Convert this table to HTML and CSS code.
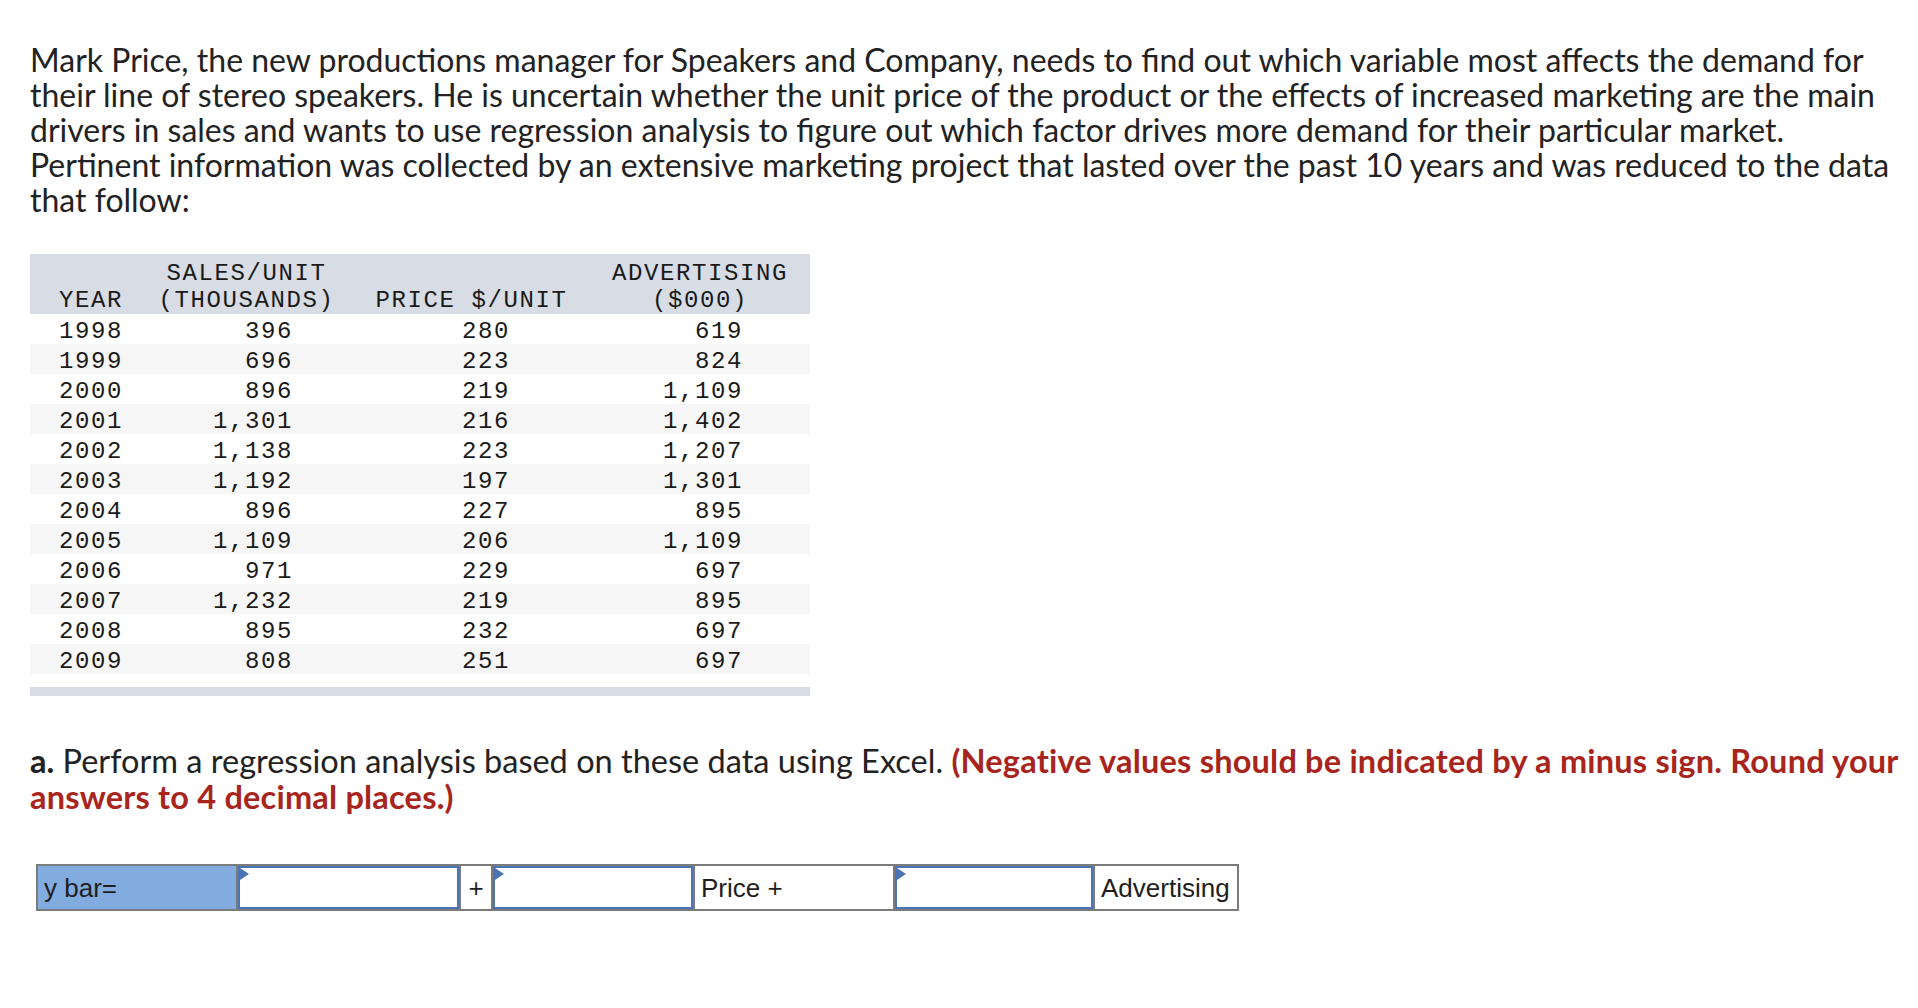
FILE: index.html
```html
<!DOCTYPE html>
<html lang="en">
<head>
<meta charset="utf-8">
<title>Regression question</title>
<link rel="stylesheet" href="styles.css">
</head>
<body>
<main class="question">
  <p class="intro">Mark Price, the new productions manager for Speakers and Company, needs to find out which variable most affects the demand for their line of stereo speakers. He is uncertain whether the unit price of the product or the effects of increased marketing are the main drivers in sales and wants to use regression analysis to figure out which factor drives more demand for their particular market. Pertinent information was collected by an extensive marketing project that lasted over the past 10 years and was reduced to the data that follow:</p>

  <div class="data-wrap">
    <table class="data">
      <colgroup>
        <col class="c-year">
        <col class="c-sales">
        <col class="c-price">
        <col class="c-adv">
      </colgroup>
      <thead>
        <tr>
          <th class="h-year">YEAR</th>
          <th>SALES/UNIT<br>(THOUSANDS)</th>
          <th>PRICE $/UNIT</th>
          <th>ADVERTISING<br>($000)</th>
        </tr>
      </thead>
      <tbody>
        <tr><td class="d-year">1998</td><td class="d-sales">396</td><td class="d-price">280</td><td class="d-adv">619</td></tr>
        <tr><td class="d-year">1999</td><td class="d-sales">696</td><td class="d-price">223</td><td class="d-adv">824</td></tr>
        <tr><td class="d-year">2000</td><td class="d-sales">896</td><td class="d-price">219</td><td class="d-adv">1,109</td></tr>
        <tr><td class="d-year">2001</td><td class="d-sales">1,301</td><td class="d-price">216</td><td class="d-adv">1,402</td></tr>
        <tr><td class="d-year">2002</td><td class="d-sales">1,138</td><td class="d-price">223</td><td class="d-adv">1,207</td></tr>
        <tr><td class="d-year">2003</td><td class="d-sales">1,192</td><td class="d-price">197</td><td class="d-adv">1,301</td></tr>
        <tr><td class="d-year">2004</td><td class="d-sales">896</td><td class="d-price">227</td><td class="d-adv">895</td></tr>
        <tr><td class="d-year">2005</td><td class="d-sales">1,109</td><td class="d-price">206</td><td class="d-adv">1,109</td></tr>
        <tr><td class="d-year">2006</td><td class="d-sales">971</td><td class="d-price">229</td><td class="d-adv">697</td></tr>
        <tr><td class="d-year">2007</td><td class="d-sales">1,232</td><td class="d-price">219</td><td class="d-adv">895</td></tr>
        <tr><td class="d-year">2008</td><td class="d-sales">895</td><td class="d-price">232</td><td class="d-adv">697</td></tr>
        <tr><td class="d-year">2009</td><td class="d-sales">808</td><td class="d-price">251</td><td class="d-adv">697</td></tr>
      </tbody>
    </table>
    <div class="data-foot"></div>
  </div>

  <p class="part"><strong>a.</strong> Perform a regression analysis based on these data using Excel. <strong class="note">(Negative values should be indicated by a minus sign. Round your answers to 4 decimal places.)</strong></p>

  <div class="equation">
    <div class="cell label ybar">y bar=</div>
    <div class="cell answer"></div>
    <div class="cell label plus">+</div>
    <div class="cell answer a2"></div>
    <div class="cell label price">Price +</div>
    <div class="cell answer a3"></div>
    <div class="cell label adv">Advertising</div>
  </div>
</main>
</body>
</html>
```

FILE: styles.css
```css
html, body {
  margin: 0;
  padding: 0;
  background: #ffffff;
}

.question {
  padding: 42px 8px 0 30px;
  width: 1880px;
  color: #222222;
  font-family: Lato, "Open Sans", Arial, sans-serif;
}

.intro {
  margin: 0;
  font-size: 32px;
  line-height: 35px;
}

.data-wrap {
  margin-top: 37px;
  width: 780px;
}

.data {
  width: 780px;
  table-layout: fixed;
  border-collapse: collapse;
  font-family: "Liberation Mono", "Courier New", monospace;
  font-size: 24px;
  letter-spacing: 1.6px;
  color: #1a1a1a;
}

.c-year { width: 110px; }
.c-sales { width: 213px; }
.c-price { width: 237px; }
.c-adv { width: 220px; }

.data thead tr {
  background: #d8dce5;
}

.data th {
  font-weight: normal;
  line-height: 27px;
  padding: 6px 0 0 0;
  text-align: center;
  vertical-align: bottom;
}

.data th.h-year {
  text-align: right;
  padding-right: 17px;
}

.data td {
  line-height: 24px;
  padding: 6px 0 0 0;
  text-align: right;
}

.data tbody tr:nth-child(even) {
  background: #f6f6f6;
}

.data td.d-year { padding-right: 17px; }
.data td.d-sales { padding-right: 60px; }
.data td.d-price { padding-right: 80px; }
.data td.d-adv { padding-right: 67px; }

.data-foot {
  margin-top: 13px;
  height: 9px;
  background: #d8dce5;
}

.part {
  margin: 47px 0 0 0;
  font-size: 32.5px;
  line-height: 36px;
}

.part strong {
  font-weight: 700;
}

.part .note {
  color: #a8251d;
  letter-spacing: 0.2px;
}

.equation {
  margin: 49px 0 0 6px;
  display: inline-flex;
  gap: 2px;
  padding: 2px;
  background: #7b7b7b;
  height: 43px;
  font-family: "Liberation Sans", Arial, sans-serif;
  font-size: 26px;
  color: #1e1e1e;
}

.cell {
  background: #ffffff;
  display: flex;
  align-items: center;
  box-sizing: border-box;
}

.label {
  padding-left: 6px;
  padding-top: 2px;
}

.ybar {
  width: 198px;
  background: #82abdf;
}

.plus {
  width: 30px;
  padding-left: 0;
  justify-content: center;
}

.price { width: 198px; }
.adv { width: 142px; }

.answer {
  width: 221px;
  border: 2px solid #4a74b6;
  position: relative;
}

.answer.a2 { width: 200px; }
.answer.a3 { width: 198px; }

.answer::before {
  content: "";
  position: absolute;
  top: 0;
  left: 0;
  width: 0;
  height: 0;
  border-top: 6px solid transparent;
  border-bottom: 6px solid transparent;
  border-left: 9px solid #4a74b6;
}
```
